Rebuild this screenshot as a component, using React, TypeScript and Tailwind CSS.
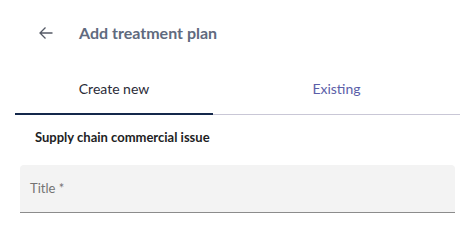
import { useState } from 'react';

export default function App() {
  const [tab, setTab] = useState<'new' | 'existing'>('new');

  return (
    <div className="w-[475px] h-[249px] bg-white font-['Lato','Noto_Sans',sans-serif] overflow-hidden">
      <div className="px-[15px]">
        {/* Header */}
        <div className="h-[66px] flex items-center pl-[24px]">
          <button className="w-[14px] h-[14px] flex items-center justify-center text-[#555a66]">
            <svg width="14" height="14" viewBox="0 0 14 14" fill="none" stroke="currentColor" strokeWidth="1.3">
              <path d="M13.5 7H1M6.5 1.5L1 7l5.5 5.5" />
            </svg>
          </button>
          <h1 className="ml-[26px] text-[16px] font-bold text-[#606a7e] leading-none">Add treatment plan</h1>
        </div>

        {/* Tabs */}
        <div className="relative flex border-b border-[#c9c7d6]">
          <button
            onClick={() => setTab('new')}
            className="relative w-[198px] h-[48px] pb-[4px] flex items-center justify-center text-[14px] text-[#2b2c38]"
          >
            Create new
            {tab === 'new' && <span className="absolute left-0 right-0 -bottom-[1px] h-[2px] bg-[#14284b]" />}
          </button>
          <button
            onClick={() => setTab('existing')}
            className="relative flex-1 h-[48px] pb-[4px] flex items-center justify-center text-[14px] text-[#5b5ea8]"
          >
            Existing
            {tab === 'existing' && <span className="absolute left-0 right-0 -bottom-[1px] h-[2px] bg-[#14284b]" />}
          </button>
        </div>

        {/* Content */}
        <p className="mt-[14px] pl-[20px] text-[13px] leading-[16px] font-bold text-[#1e1e24]">
          Supply chain commercial issue
        </p>

        <div className="mt-[20px] mx-[5px] h-[48px] bg-[#f3f3f3] rounded-t-[4px] border-b border-[#8c8c8c] flex items-center px-[10px]">
          <span className="text-[13px] text-[#737373]">Title *</span>
        </div>
      </div>
    </div>
  );
}
